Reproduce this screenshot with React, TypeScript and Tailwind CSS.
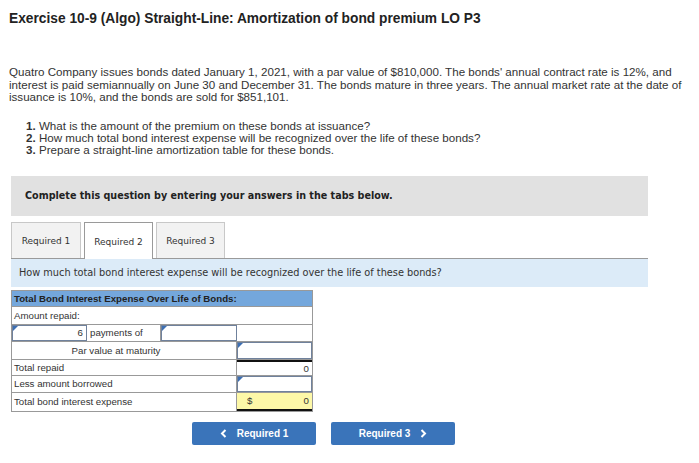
import React from 'react';

function Flag() {
  // small blue corner marker shown on editable cells
  return (
    <span className="absolute left-0 top-0 w-0 h-0 border-t-[5px] border-r-[5px] border-t-[#3d6fb3] border-r-transparent" />
  );
}

function InputCell({ value = '', w }: { value?: string; w: string }) {
  return (
    <div className={`relative ${w} h-full border border-[#6f819c] bg-white flex items-center justify-end pr-[3px]`}>
      <Flag />
      {value}
    </div>
  );
}

export default function App() {
  return (
    <div className="w-[699px] h-[463px] bg-white overflow-hidden font-['Liberation_Sans',Arial,sans-serif] text-[#333]">
      {/* Heading */}
      <h1 className="pl-[9px] pt-[11px] text-[13.75px] leading-[16px] font-bold text-[#222]">
        Exercise 10-9 (Algo) Straight-Line: Amortization of bond premium LO P3
      </h1>

      {/* Problem text */}
      <p className="pl-[9px] mt-[39px] text-[11.6px] leading-[12.5px] text-[#333] whitespace-nowrap">
        Quatro Company issues bonds dated January 1, 2021, with a par value of $810,000. The bonds' annual contract rate is 12%, and
        <br />
        interest is paid semiannually on June 30 and December 31. The bonds mature in three years. The annual market rate at the date of
        <br />
        issuance is 10%, and the bonds are sold for $851,101.
      </p>

      <ol className="pl-[26px] mt-[16px] text-[11.6px] leading-[12.3px] text-[#333]">
        <li><b>1.</b> What is the amount of the premium on these bonds at issuance?</li>
        <li><b>2.</b> How much total bond interest expense will be recognized over the life of these bonds?</li>
        <li><b>3.</b> Prepare a straight-line amortization table for these bonds.</li>
      </ol>

      {/* Instructions box */}
      <div className="ml-[11px] mt-[20px] w-[637px] h-[40px] bg-[#e1e1e1] flex items-center pl-[14px] font-['DejaVu_Sans',Verdana,sans-serif] text-[9.6px] font-bold text-[#222]">
        Complete this question by entering your answers in the tabs below.
      </div>

      {/* Tabs */}
      <div className="ml-[11px] mt-[6px] w-[637px] font-['DejaVu_Sans',Verdana,sans-serif] text-[9px] text-[#333]">
        <div className="flex items-end gap-[3px] h-[37px] border-b border-[#9a9a9a]">
          <div className="w-[70px] h-[36px] pt-[2px] bg-[#f2f2f2] border border-b-0 border-[#c8c8c8] flex items-center justify-center">Required 1</div>
          <div className="w-[69px] h-[37px] pt-[2px] bg-white border border-b-0 border-[#9a9a9a] -mb-px flex items-center justify-center">Required 2</div>
          <div className="w-[69px] h-[36px] pt-[2px] bg-[#f2f2f2] border border-b-0 border-[#c8c8c8] flex items-center justify-center">Required 3</div>
        </div>
        <div className="h-[28px] bg-[#dcebf8] flex items-center pl-[8px] text-[9.75px]">
          How much total bond interest expense will be recognized over the life of these bonds?
        </div>
      </div>

      {/* Worksheet */}
      <div className="ml-[11px] mt-[3px] w-[302px] border border-[#999] text-[9.7px] text-[#333]">
        <div className="h-[16px] bg-[#74a7dc] border-b border-[#999] flex items-center pl-[2px] font-bold text-[#222]">
          Total Bond Interest Expense Over Life of Bonds:
        </div>
        <div className="h-[18px] border-b border-[#999] flex items-center pl-[2px]">Amount repaid:</div>
        <div className="h-[17px] border-b border-[#999] flex">
          <InputCell value="6" w="w-[75px]" />
          <div className="w-[74px] flex items-center pl-[3px] border-r border-[#999]">payments of</div>
          <InputCell w="w-[76px]" />
          <div className="flex-1" />
        </div>
        <div className="h-[18px] border-b border-[#999] flex">
          <div className="w-[225px] flex items-center justify-center pr-[16px] border-r border-[#999]">Par value at maturity</div>
          <InputCell w="flex-1" />
        </div>
        <div className="h-[16px] border-b border-[#999] flex">
          <div className="w-[225px] flex items-center pl-[2px] border-r border-[#999]">Total repaid</div>
          <div className="flex-1 border-t-2 border-[#111] flex items-center justify-end pr-[3px]">0</div>
        </div>
        <div className="h-[17px] border-b border-[#999] flex">
          <div className="w-[225px] flex items-center pl-[2px] border-r border-[#999]">Less amount borrowed</div>
          <InputCell w="flex-1" />
        </div>
        <div className="h-[18px] flex">
          <div className="w-[225px] flex items-center pl-[2px] border-r border-[#999]">Total bond interest expense</div>
          <div className="flex-1 bg-[#fdf8a8] border-b-2 border-[#111] flex items-center justify-between pl-[10px] pr-[3px]">
            <span>$</span>
            <span>0</span>
          </div>
        </div>
      </div>

      {/* Navigation */}
      <div className="flex gap-[15px] ml-[192px] mt-[10px] text-[10px] font-bold text-white">
        <button className="w-[124px] h-[23px] bg-[#3a74ba] rounded-[2px] flex items-center justify-center gap-[10px]">
          <svg width="7" height="9" viewBox="0 0 7 9"><path d="M5.5 1 L2 4.5 L5.5 8" fill="none" stroke="white" strokeWidth="2" /></svg>
          Required 1
        </button>
        <button className="w-[124px] h-[23px] bg-[#3a74ba] rounded-[2px] flex items-center justify-center gap-[10px]">
          Required 3
          <svg width="7" height="9" viewBox="0 0 7 9"><path d="M1.5 1 L5 4.5 L1.5 8" fill="none" stroke="white" strokeWidth="2" /></svg>
        </button>
      </div>
    </div>
  );
}
